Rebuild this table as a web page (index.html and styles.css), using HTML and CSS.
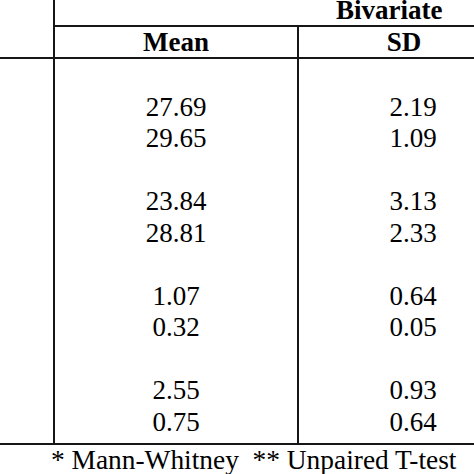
FILE: index.html
```html
<!DOCTYPE html>
<html lang="en">
<head>
<meta charset="utf-8">
<title>Bivariate table</title>
<link rel="stylesheet" href="styles.css">
</head>
<body>
<div class="sheet">
  <div class="grid">
    <div class="stub stub-head"></div>
    <div class="span-head">Bivariate</div>
    <div class="col-head mean-head">Mean</div>
    <div class="col-head sd-head">SD</div>
    <div class="stub stub-body"></div>
    <div class="col-body mean-body">
      <div class="group"><span>27.69</span><span>29.65</span></div>
      <div class="group"><span>23.84</span><span>28.81</span></div>
      <div class="group"><span>1.07</span><span>0.32</span></div>
      <div class="group"><span>2.55</span><span>0.75</span></div>
    </div>
    <div class="col-body sd-body">
      <div class="group"><span>2.19</span><span>1.09</span></div>
      <div class="group"><span>3.13</span><span>2.33</span></div>
      <div class="group"><span>0.64</span><span>0.05</span></div>
      <div class="group"><span>0.93</span><span>0.64</span></div>
    </div>
  </div>
  <p class="note">* Mann-Whitney  ** Unpaired T-test</p>
</div>
</body>
</html>
```
FILE: styles.css
```css
html, body {
  margin: 0;
  padding: 0;
  background: #ffffff;
}

.sheet {
  width: 474px;
  height: 474px;
  overflow: hidden;
  font-family: "Liberation Serif", "Times New Roman", serif;
  font-size: 27px;
  color: #000000;
}

.grid {
  display: grid;
  grid-template-columns: 55px 244px 1fr;
}

.stub {
  border-right: 2px solid #161616;
  border-bottom: 2px solid #161616;
}

.stub-head {
  grid-row: 1 / 3;
  grid-column: 1;
}

.span-head {
  grid-column: 2 / 4;
  height: 20px;
  padding: 0 0 5px 281px;
  line-height: 20px;
  font-weight: bold;
  border-bottom: 2px solid #161616;
}

.col-head {
  height: 30px;
  line-height: 31px;
  font-weight: bold;
  text-align: center;
  border-bottom: 2px solid #161616;
}

.mean-head {
  border-right: 2px solid #161616;
}

.sd-head {
  padding-left: 35px;
}

.col-body {
  display: flex;
  flex-direction: column;
  gap: 31.5px;
  padding: 32.5px 0 5px;
  line-height: 31.5px;
  text-align: center;
  border-bottom: 2px solid #161616;
}

.mean-body {
  border-right: 2px solid #161616;
}

.sd-body {
  padding-left: 53px;
}

.group {
  display: flex;
  flex-direction: column;
}

.note {
  margin: 0;
  padding-left: 51px;
  font-size: 27.4px;
  line-height: 30px;
  white-space: pre;
}
```
